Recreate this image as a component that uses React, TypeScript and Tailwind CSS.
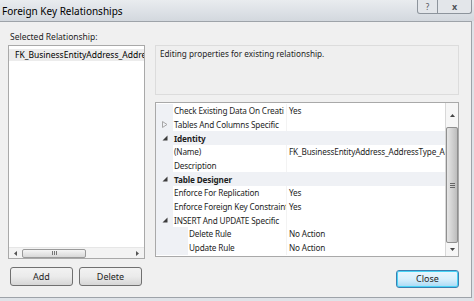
import React from 'react';

type Row = {
  name: string;
  value?: string;
  kind: 'prop' | 'category' | 'group';
  expander?: 'open' | 'closed';
  indent?: boolean;
};

const rows: Row[] = [
  { name: 'Check Existing Data On Creati', value: 'Yes', kind: 'prop' },
  { name: 'Tables And Columns Specific', kind: 'group', expander: 'closed' },
  { name: 'Identity', kind: 'category', expander: 'open' },
  { name: '(Name)', value: 'FK_BusinessEntityAddress_AddressType_AddressTypeID', kind: 'prop' },
  { name: 'Description', value: '', kind: 'prop' },
  { name: 'Table Designer', kind: 'category', expander: 'open' },
  { name: 'Enforce For Replication', value: 'Yes', kind: 'prop' },
  { name: 'Enforce Foreign Key Constraint', value: 'Yes', kind: 'prop' },
  { name: 'INSERT And UPDATE Specific', kind: 'group', expander: 'open' },
  { name: 'Delete Rule', value: 'No Action', kind: 'prop', indent: true },
  { name: 'Update Rule', value: 'No Action', kind: 'prop', indent: true },
];

function Expander({ state }: { state: 'open' | 'closed' }) {
  if (state === 'closed') {
    return (
      <svg width="6" height="7" viewBox="0 0 6 7">
        <path d="M0.5 0.5 L5 3.5 L0.5 6.5 Z" fill="none" stroke="#a6a6a6" strokeWidth="1" />
      </svg>
    );
  }
  return (
    <svg width="6" height="6" viewBox="0 0 6 6">
      <path d="M5.5 0.5 L5.5 5.5 L0.5 5.5 Z" fill="#3c3c3c" />
    </svg>
  );
}

function WinButton({ label, className }: { label: string; className?: string }) {
  return (
    <div
      className={
        'flex items-center justify-center rounded-[3px] border border-[#707070] bg-gradient-to-b from-[#f2f2f2] via-[#ebebeb] to-[#d6d6d6] text-[9px] text-[#1e1e1e] ' +
        (className ?? '')
      }
    >
      {label}
    </div>
  );
}

export default function App() {
  return (
    <div
      className="relative h-[301px] w-[474px] overflow-hidden bg-[#dfe3e8] text-black"
      style={{ fontFamily: '"Noto Sans", "Open Sans", sans-serif' }}
    >
      {/* Title bar */}
      <div className="flex h-[21px] items-start bg-gradient-to-b from-[#e9ecef] via-[#dee2e7] to-[#d3d8de]">
        <div className="pl-[2px] pt-[5px] text-[10px] leading-[12px] text-black">Foreign Key Relationships</div>
        <div className="ml-auto mr-[2px] flex h-[14px] shrink-0 text-[#4f5359]">
          <div className="flex w-[21px] items-center justify-center rounded-bl-[3px] border border-t-0 border-[#8d949c] bg-[#e3e6ea] text-[8px] leading-none">
            ?
          </div>
          <div className="flex w-[34px] items-center justify-center rounded-br-[3px] border border-l-0 border-t-0 border-[#8d949c] bg-[#e3e6ea] text-[9px] font-bold leading-none">
            x
          </div>
        </div>
      </div>

      {/* Dialog body */}
      <div className="mr-[2px] flex h-[277px] border-b border-r border-t border-[#9ea3a9] bg-[#f0f0f0] text-[8.2px]">
        {/* Left column */}
        <div className="flex w-[150px] shrink-0 flex-col pl-[8px]">
          <div className="pl-[2px] pt-[9px] text-[8.5px] leading-[12px] text-[#1e1e1e]">Selected Relationship:</div>
          <div className="mt-[2px] flex h-[214px] w-[137px] flex-col overflow-hidden border border-[#a9a9a9] bg-white">
            <div className="mt-[3px] h-[12px] overflow-hidden whitespace-nowrap bg-[#ececec] pl-[6px] text-[8.5px] leading-[12px]">
              FK_BusinessEntityAddress_Addres
            </div>
            <div className="flex-1" />
            <div className="flex h-[11px] items-center border-t border-[#e6e6e6] bg-[#f3f3f3]">
              <div className="flex w-[13px] justify-center">
                <svg width="3" height="5" viewBox="0 0 3 5">
                  <path d="M3 0 L0 2.5 L3 5 Z" fill="#555" />
                </svg>
              </div>
              <div className="flex h-[9px] w-[64px] items-center justify-center rounded-[2px] border border-[#9a9a9a] bg-gradient-to-b from-[#f5f5f5] to-[#d8d8d8]">
                <div className="flex gap-[1px]">
                  <div className="h-[4px] w-px bg-[#777]" />
                  <div className="h-[4px] w-px bg-[#777]" />
                  <div className="h-[4px] w-px bg-[#777]" />
                </div>
              </div>
              <div className="flex-1" />
              <div className="flex w-[13px] justify-center">
                <svg width="3" height="5" viewBox="0 0 3 5">
                  <path d="M0 0 L3 2.5 L0 5 Z" fill="#555" />
                </svg>
              </div>
            </div>
          </div>
          <div className="mt-[8px] flex gap-[6px] pl-[2px]">
            <WinButton label="Add" className="h-[19px] w-[63px]" />
            <WinButton label="Delete" className="h-[19px] w-[63px]" />
          </div>
        </div>

        {/* Right column */}
        <div className="flex w-[314px] min-w-0 shrink-0 flex-col pl-[5px] pr-[5px] pt-[23px]">
          <div className="h-[50px] border border-[#dcdcdc] bg-[#efefef] px-[4px] pt-[2px] text-[8.2px] leading-[12px] text-[#1e1e1e]">
            Editing properties for existing relationship.
          </div>
          <div className="mt-[7px] flex h-[155px] min-w-0 border border-[#a9a9a9] bg-white tracking-[-0.15px]">
            <div className="flex min-w-0 flex-1 flex-col overflow-hidden pt-px">
              {rows.map((r) => (
                <div key={r.name} className="flex h-[13.7px] min-w-0 items-center leading-[13px]">
                  <div
                    className={
                      'flex h-full shrink-0 items-center justify-center bg-[#eff1f5] ' +
                      (r.indent ? 'w-[32px]' : 'w-[17px]')
                    }
                  >
                    {r.expander && <Expander state={r.expander} />}
                  </div>
                  {r.kind === 'category' ? (
                    <div className="flex h-full min-w-0 flex-1 items-center bg-[#eff1f5] pl-[1px] font-bold text-[#1e1e1e]">
                      {r.name}
                    </div>
                  ) : (
                    <>
                      <div
                        className={
                          'h-full shrink-0 overflow-hidden whitespace-nowrap pl-[1px] text-[#1e1e1e] ' +
                          (r.indent ? 'w-[98px]' : 'w-[113px]')
                        }
                      >
                        {r.name}
                      </div>
                      <div className="h-full min-w-0 flex-1 overflow-hidden whitespace-nowrap border-l border-[#f3f3f3] pl-[2px] text-[#1e1e1e]">
                        {r.value}
                      </div>
                    </>
                  )}
                </div>
              ))}
            </div>
            {/* Vertical scrollbar */}
            <div className="flex w-[13px] shrink-0 flex-col border-l border-[#d8d8d8] bg-[#e4e4e4]">
              <div className="flex h-[24px] items-center justify-center bg-[#f6f6f6]">
                <svg width="5" height="3" viewBox="0 0 5 3">
                  <path d="M0 3 L2.5 0 L5 3 Z" fill="#444" />
                </svg>
              </div>
              <div className="flex h-[116px] items-center justify-center rounded-[2px] border border-[#8f8f8f] bg-gradient-to-r from-[#e6e6e6] via-[#d2d2d2] to-[#bdbdbd]">
                <div className="flex flex-col gap-[1px]">
                  <div className="h-px w-[5px] bg-[#666]" />
                  <div className="h-px w-[5px] bg-[#666]" />
                  <div className="h-px w-[5px] bg-[#666]" />
                </div>
              </div>
              <div className="flex flex-1 items-center justify-center bg-[#f6f6f6]">
                <svg width="5" height="3" viewBox="0 0 5 3">
                  <path d="M0 0 L2.5 3 L5 0 Z" fill="#444" />
                </svg>
              </div>
            </div>
          </div>
          <div className="mt-[13px] flex justify-end">
            <div className="flex h-[18px] w-[63px] items-center justify-center rounded-[3px] border border-[#3c7fb1] bg-gradient-to-b from-[#eaf6fd] via-[#d9f0fc] to-[#a7d9f5] text-[9px] text-[#1e1e1e] shadow-[inset_0_0_0_1px_#48d3f5]">
              Close
            </div>
          </div>
        </div>
      </div>
    </div>
  );
}
